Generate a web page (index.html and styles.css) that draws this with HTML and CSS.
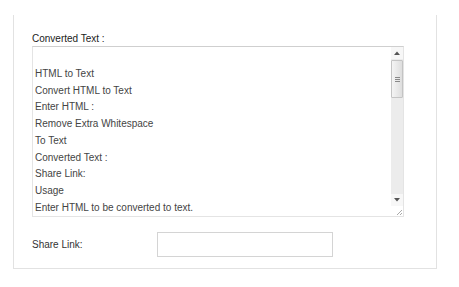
FILE: index.html
```html
<!DOCTYPE html>
<html lang="en">
<head>
    <meta charset="UTF-8">
    <title>HTML to Text</title>
    <link rel="stylesheet" href="styles.css">
</head>
<body>
    <div class="panel">
        <div class="field-label">Converted Text :</div>
        <div class="output">
            <div class="output-text">
                <div class="line">&nbsp;</div>
                <div class="line">HTML to Text</div>
                <div class="line">Convert HTML to Text</div>
                <div class="line">Enter HTML :</div>
                <div class="line">Remove Extra Whitespace</div>
                <div class="line">To Text</div>
                <div class="line">Converted Text :</div>
                <div class="line">Share Link:</div>
                <div class="line">Usage</div>
                <div class="line">Enter HTML to be converted to text.</div>
            </div>
            <div class="scrollbar">
                <div class="scroll-btn">
                    <svg width="6" height="4" viewBox="0 0 6 4"><path d="M0 4 L3 0.5 L6 4 Z" fill="#555"/></svg>
                </div>
                <div class="scroll-track">
                    <div class="scroll-thumb">
                        <span></span><span></span><span></span>
                    </div>
                </div>
                <div class="scroll-btn">
                    <svg width="6" height="4" viewBox="0 0 6 4"><path d="M0 0 L3 3.5 L6 0 Z" fill="#555"/></svg>
                </div>
                <div class="grip">
                    <svg width="8" height="8" viewBox="0 0 8 8"><path d="M7 2 L2 7 M7 5 L5 7" stroke="#aaa" stroke-width="1"/></svg>
                </div>
            </div>
        </div>
        <div class="share-row">
            <div class="share-label">Share Link:</div>
            <input type="text" class="share-input">
        </div>
    </div>
</body>
</html>
```

FILE: styles.css
```css
body {
    margin: 0;
    background: #fff;
    font-family: "Liberation Sans", Arial, sans-serif;
    font-size: 10px;
}
.panel {
    margin: 15px 0 0 13px;
    width: 404px;
    padding: 16px 0 11px 18px;
    border: 1px solid #e2e2e2;
    border-top: none;
}
.field-label {
    color: #222;
    line-height: 15px;
}
.output {
    display: flex;
    width: 370px;
    height: 169px;
    border: 1px solid #e4e4e4;
    border-top-color: #cfcfcf;
    overflow: hidden;
}
.output-text {
    flex: 1;
    padding: 2px 0 0 2px;
    color: #444;
    line-height: 16.75px;
    overflow: hidden;
}
.scrollbar {
    width: 12px;
    display: flex;
    flex-direction: column;
    background: #ececec;
}
.scroll-btn {
    height: 12px;
    background: #f7f7f7;
    display: flex;
    align-items: center;
    justify-content: center;
}
.scroll-track {
    flex: 1;
    padding-top: 1px;
}
.scroll-thumb {
    height: 36px;
    border: 1px solid #c4c4c4;
    border-radius: 1px;
    background: linear-gradient(to right, #f4f4f4, #dedede);
    display: flex;
    flex-direction: column;
    align-items: center;
    justify-content: center;
    gap: 1px;
}
.scroll-thumb span {
    width: 5px;
    height: 1px;
    background: #888;
}
.grip {
    height: 10px;
    background: #fff;
    display: flex;
    align-items: flex-end;
    justify-content: flex-end;
}
.share-row {
    display: flex;
    align-items: center;
    margin-top: 15px;
}
.share-label {
    width: 125px;
    color: #333;
}
.share-input {
    box-sizing: border-box;
    width: 176px;
    height: 25px;
    margin: 0;
    border: 1px solid #d4d4d4;
    background: #fff;
}
```
